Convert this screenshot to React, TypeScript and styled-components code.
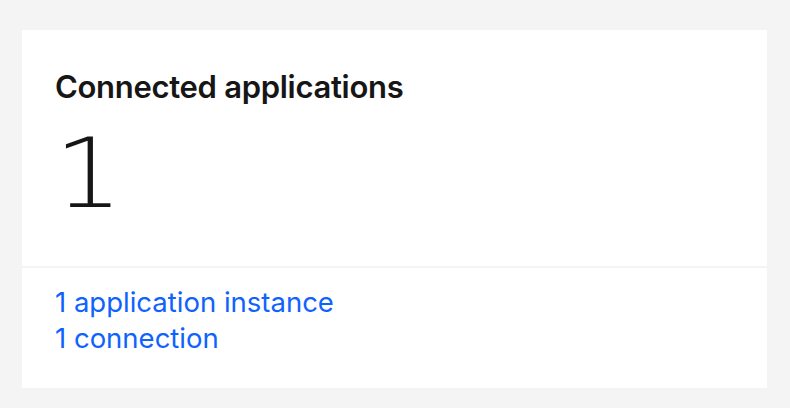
import React from "react";
import styled, { createGlobalStyle } from "styled-components";

const GlobalStyle = createGlobalStyle`
  html, body {
    margin: 0;
    padding: 0;
    background: #f4f4f4;
  }
  body {
    font-family: "Inter", "Noto Sans", sans-serif;
    color: #161616;
  }
`;

const Page = styled.div`
  padding: 30px 23px 20px 22px;
`;

const Tile = styled.section`
  background: #ffffff;
  display: flex;
  flex-direction: column;
  height: 358px;
`;

const Main = styled.div`
  padding: 33px 33px 0;
  height: 238px;
  box-sizing: border-box;
  border-bottom: 2px solid #f4f4f4;
`;

const Title = styled.h2`
  margin: 0;
  font-size: 31px;
  font-weight: 600;
  line-height: 48px;
  letter-spacing: -0.3px;
  color: #161616;
`;

const BigNumber = styled.div`
  font-family: "DejaVu Sans", sans-serif;
  font-size: 97px;
  font-weight: 200;
  line-height: 116px;
  margin: 5px 0 0 -1px;
  transform: scaleX(1.12);
  transform-origin: left center;
  color: #161616;
`;

const Links = styled.div`
  display: flex;
  flex-direction: column;
  padding: 16px 33px 0;
`;

const Link = styled.a`
  font-size: 27.5px;
  line-height: 36px;
  color: #0f62fe;
  text-decoration: none;
  cursor: pointer;
`;

export default function App() {
  return (
    <>
      <GlobalStyle />
      <Page>
        <Tile>
          <Main>
            <Title>Connected applications</Title>
            <BigNumber>1</BigNumber>
          </Main>
          <Links>
            <Link>1 application instance</Link>
            <Link>1 connection</Link>
          </Links>
        </Tile>
      </Page>
    </>
  );
}
